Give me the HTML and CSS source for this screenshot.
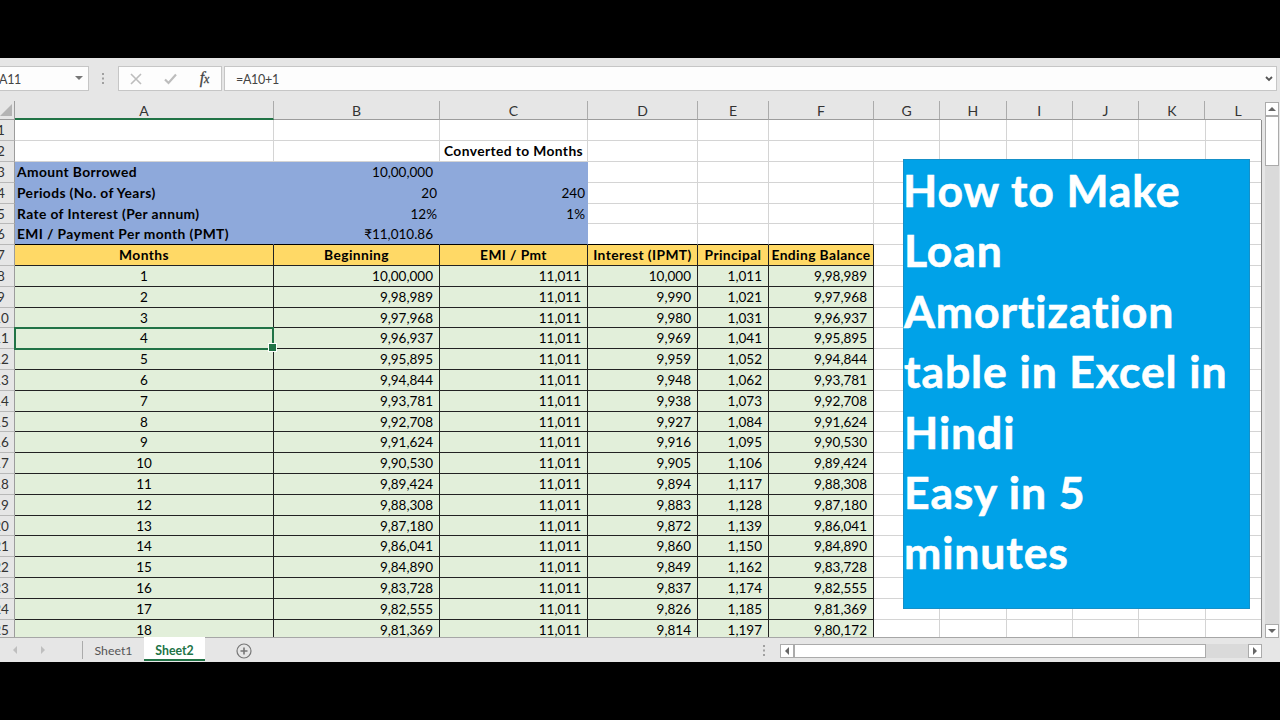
FILE: index.html
```html
<!DOCTYPE html>
<html lang="en">
  <head>
    <meta charset="utf-8">
    <title>Loan Amortization</title>
    <link rel="stylesheet" href="styles.css">
  </head>
  <body>
    <div class="app">
      <div class="formula-bar">
        <div class="name-box"><span>A11</span><i class="caret"></i></div>
        <svg class="dots" width="3" height="13" viewBox="0 0 3 13" fill="#a0a0a0"><path d="M0 1h2v2H0zM0 5.500h2v2H0zM0 10h2v2H0z"/></svg>
        <div class="fx-box">
          <svg width="12" height="12" viewBox="0 0 12 12" fill="none" stroke="#bdbdbd" stroke-width="1.600"><path d="M1 1l10 10M11 1L1 11"/></svg>
          <svg width="13" height="12" viewBox="0 0 13 12" fill="none" stroke="#bdbdbd" stroke-width="2.200"><path d="M1 6.500l3.500 3.500L12 1.500"/></svg>
          <span class="fx">f<small>x</small></span>
        </div>
        <div class="formula">
          <span>=A10+1</span>
          <svg width="8" height="6" viewBox="0 0 8 6" fill="none" stroke="#555" stroke-width="1.800"><path d="M1 1l3 3 3-3"/></svg>
        </div>
      </div>

      <div class="main">
        <div class="sheet">
          <div class="row head">
            <b class="corner"><svg width="12" height="12" viewBox="0 0 12 12" fill="#b4b4b4"><path d="M12 0v12H0z"/></svg></b>
            <span class="current">A</span><span>B</span><span>C</span><span>D</span><span>E</span><span>F</span>
            <div class="more"><span>G</span><span>H</span><span>I</span><span>J</span><span>K</span><span>L</span></div>
          </div>
          <div class="row"><b>1</b><span></span><span></span><span></span><span></span><span></span><span></span><div class="more"></div></div>
          <div class="row"><b>2</b><span></span><span></span><span class="note">Converted to Months</span><span></span><span></span><span></span><div class="more"></div></div>
          <div class="row input"><b>3</b><span>Amount Borrowed</span><span class="acc">10,00,000</span><span></span><span></span><span></span><span></span><div class="more"></div></div>
          <div class="row input"><b>4</b><span>Periods (No. of Years)</span><span>20</span><span>240</span><span></span><span></span><span></span><div class="more"></div></div>
          <div class="row input"><b>5</b><span>Rate of Interest (Per annum)</span><span>12%</span><span>1%</span><span></span><span></span><span></span><div class="more"></div></div>
          <div class="row input last"><b>6</b><span>EMI / Payment Per month (PMT)</span><span class="acc">₹11,010.86</span><span></span><span></span><span></span><span></span><div class="more"></div></div>
          <div class="row title"><b>7</b><span>Months</span><span>Beginning</span><span>EMI / Pmt</span><span>Interest (IPMT)</span><span>Principal</span><span>Ending Balance</span><div class="more"></div></div>
          <div class="row data"><b>8</b><span>1</span><span>10,00,000</span><span>11,011</span><span>10,000</span><span>1,011</span><span>9,98,989</span><div class="more"></div></div>
          <div class="row data"><b>9</b><span>2</span><span>9,98,989</span><span>11,011</span><span>9,990</span><span>1,021</span><span>9,97,968</span><div class="more"></div></div>
          <div class="row data"><b>10</b><span>3</span><span>9,97,968</span><span>11,011</span><span>9,980</span><span>1,031</span><span>9,96,937</span><div class="more"></div></div>
          <div class="row data"><b>11</b><span class="selected">4</span><span>9,96,937</span><span>11,011</span><span>9,969</span><span>1,041</span><span>9,95,895</span><div class="more"></div></div>
          <div class="row data"><b>12</b><span>5</span><span>9,95,895</span><span>11,011</span><span>9,959</span><span>1,052</span><span>9,94,844</span><div class="more"></div></div>
          <div class="row data"><b>13</b><span>6</span><span>9,94,844</span><span>11,011</span><span>9,948</span><span>1,062</span><span>9,93,781</span><div class="more"></div></div>
          <div class="row data"><b>14</b><span>7</span><span>9,93,781</span><span>11,011</span><span>9,938</span><span>1,073</span><span>9,92,708</span><div class="more"></div></div>
          <div class="row data"><b>15</b><span>8</span><span>9,92,708</span><span>11,011</span><span>9,927</span><span>1,084</span><span>9,91,624</span><div class="more"></div></div>
          <div class="row data"><b>16</b><span>9</span><span>9,91,624</span><span>11,011</span><span>9,916</span><span>1,095</span><span>9,90,530</span><div class="more"></div></div>
          <div class="row data"><b>17</b><span>10</span><span>9,90,530</span><span>11,011</span><span>9,905</span><span>1,106</span><span>9,89,424</span><div class="more"></div></div>
          <div class="row data"><b>18</b><span>11</span><span>9,89,424</span><span>11,011</span><span>9,894</span><span>1,117</span><span>9,88,308</span><div class="more"></div></div>
          <div class="row data"><b>19</b><span>12</span><span>9,88,308</span><span>11,011</span><span>9,883</span><span>1,128</span><span>9,87,180</span><div class="more"></div></div>
          <div class="row data"><b>20</b><span>13</span><span>9,87,180</span><span>11,011</span><span>9,872</span><span>1,139</span><span>9,86,041</span><div class="more"></div></div>
          <div class="row data"><b>21</b><span>14</span><span>9,86,041</span><span>11,011</span><span>9,860</span><span>1,150</span><span>9,84,890</span><div class="more"></div></div>
          <div class="row data"><b>22</b><span>15</span><span>9,84,890</span><span>11,011</span><span>9,849</span><span>1,162</span><span>9,83,728</span><div class="more"></div></div>
          <div class="row data"><b>23</b><span>16</span><span>9,83,728</span><span>11,011</span><span>9,837</span><span>1,174</span><span>9,82,555</span><div class="more"></div></div>
          <div class="row data"><b>24</b><span>17</span><span>9,82,555</span><span>11,011</span><span>9,826</span><span>1,185</span><span>9,81,369</span><div class="more"></div></div>
          <div class="row data"><b>25</b><span>18</span><span>9,81,369</span><span>11,011</span><span>9,814</span><span>1,197</span><span>9,80,172</span><div class="more"></div></div>
        </div>

        <div class="v-scroll">
          <div class="btn"><i class="up"></i></div>
          <div class="thumb"></div>
          <div class="track"></div>
          <div class="btn"><i class="down"></i></div>
        </div>
      </div>

      <div class="tab-bar">
        <div class="nav"><i class="left"></i><i class="right"></i></div>
        <div class="tab">Sheet1</div>
        <div class="tab active">Sheet2</div>
        <svg class="add" width="16" height="16" viewBox="0 0 16 16" fill="none" stroke="#777"><circle cx="8" cy="8" r="7" stroke-width="1.200"/><path d="M8 4.500v7M4.500 8h7" stroke-width="1.600"/></svg>
        <svg class="dots" width="3" height="13" viewBox="0 0 3 13" fill="#a0a0a0"><path d="M0 1h2v2H0zM0 5.500h2v2H0zM0 10h2v2H0z"/></svg>
        <div class="h-scroll">
          <div class="btn"><i class="left"></i></div>
          <div class="thumb"></div>
          <div class="track"></div>
          <div class="btn"><i class="right"></i></div>
        </div>
      </div>

      <div class="banner">How to Make<br>Loan<br>Amortization<br>table in Excel in<br>Hindi<br>Easy in 5<br>minutes</div>
    </div>
  </body>
</html>
```

FILE: styles.css
```css
* {
  box-sizing: border-box;
}

body {
  background: #000;
  font-family: Lato, sans-serif;
  height: 720px;
  margin: 0;
  overflow: hidden;
  padding-top: 58px;
}

.app {
  background: #e6e6e6;
  display: flex;
  flex-direction: column;
  height: 604px;
  overflow: hidden;
  position: relative;
}

/* formula bar */
.formula-bar {
  color: #444;
  display: flex;
  flex: none;
  font-size: 12.5px;
  height: 34px;
  letter-spacing: -.3px;
  padding: 8px 3px 0 0;
}

.name-box, .fx-box, .formula {
  align-items: center;
  background: #fdfdfd;
  border: 1px solid #c6c6c6;
  display: flex;
  height: 25px;
}

.name-box span, .formula span {
  padding-top: 1px;
}

.name-box {
  border-left: 0;
  justify-content: space-between;
  margin-left: -1px;
  padding-right: 5px;
  width: 90px;
}

.caret {
  border: 4px solid transparent;
  border-bottom: 0;
  border-top-color: #777;
  margin-top: -2px;
}

.formula-bar .dots {
  margin: 6px 13px 0 13px;
}

.fx-box {
  justify-content: space-between;
  padding: 0 12px 0 11px;
  width: 104px;
}

.fx {
  font: italic 16px/20px "Liberation Serif", serif;
  -webkit-text-stroke: .3px #444;
}

.fx small {
  font-size: 12px;
}

.formula {
  flex: 1;
  justify-content: space-between;
  margin-left: 2px;
  padding: 0 3px 0 11px;
}

/* grid */
.main {
  display: flex;
  flex: none;
  height: 546px;
}

.sheet {
  border-bottom: 1px solid #a6a6a6;
  height: 546px;
  margin-left: -12px;
  overflow: hidden;
  width: 1274px;
}

.row {
  background: #fff;
  border-right: 1px solid #8c8c8c;
  display: grid;
  font-size: 13.5px;
  grid-template-columns: 27px 259px 166px 148px 110px 71px 105px 1fr;
  grid-template-rows: 100%;
  height: 21px;
  line-height: 20px;
  white-space: nowrap;
}

.row:nth-child(5n+6) {
  height: 20px;
}

.row > b, .row > span {
  border-bottom: 1px solid #d4d4d4;
  border-right: 1px solid #d4d4d4;
}

.row > b {
  background: #e6e6e6;
  border-bottom-color: #b8b8b8;
  border-right-color: #9c9c9c;
  color: #333;
  font-weight: normal;
  text-align: center;
}

.more {
  background: repeating-linear-gradient(90deg, transparent 0 65.3px, #d4d4d4 65.3px 66.3px);
  border-bottom: 1px solid #d4d4d4;
  display: flex;
  overflow: hidden;
}

.head {
  background: #e6e6e6;
  border-right-color: #e6e6e6;
  color: #333;
  font-size: 14px;
  height: 28px;
  padding-top: 9px;
}

.head > b, .head > span, .head .more {
  border-bottom-color: #9c9c9c;
}

.head > span {
  border-right-color: #ababab;
  text-align: center;
}

.head .more {
  background: none;
}

.more span {
  border-right: 1px solid #ababab;
  flex: 0 0 66.3px;
  text-align: center;
}

.head .current {
  border-bottom: 2px solid #217346;
}

.corner {
  padding: 0 2px 0 0;
}

.corner svg {
  display: block;
  margin: 3px 0 0 auto;
}

.note, .title > span, .input > span:first-of-type {
  font-size: 13.8px;
  font-weight: bold;
  letter-spacing: .4px;
}

.note {
  text-align: center;
}

.input > span:nth-of-type(-n+3) {
  background: #8ea9db;
  border-color: #8ea9db;
  padding-right: 2px;
  text-align: right;
}

.input > span:nth-of-type(1) {
  padding-left: 2px;
  text-align: left;
}

.input > .acc:nth-of-type(2) {
  padding-right: 6px;
}

.last > span:nth-of-type(-n+6) {
  border-bottom-color: #000;
}

.title > span {
  background: #ffd966;
  border-color: #222;
  text-align: center;
}

.data > span {
  background: #e2efda;
  border-color: #222;
  padding-right: 6px;
  text-align: right;
}

.data > span:first-of-type {
  padding: 0;
  text-align: center;
}

.data .selected {
  position: relative;
}

.selected::before {
  border: 2px solid #217346;
  content: "";
  inset: -1px -1px -2px;
  position: absolute;
}

.selected::after {
  background: #217346;
  border: 1px solid #fff;
  bottom: -4px;
  content: "";
  height: 7px;
  position: absolute;
  right: -4px;
  width: 7px;
}

/* scrollbars */
.btn {
  align-items: center;
  background: #fff;
  border: 1px solid #ababab;
  display: flex;
  flex: 0 0 14px;
  justify-content: center;
}

.thumb {
  background: #fff;
  border: 1px solid #ababab;
}

.track {
  background: #dadada;
  flex: 1;
}

.v-scroll {
  display: flex;
  flex-direction: column;
  height: 536px;
  margin: 10px 0 0 3px;
  width: 14px;
}

.v-scroll .thumb {
  height: 50px;
}

.up, .down, .left, .right {
  border: 4px solid transparent;
}

.up {
  border-bottom-color: #666;
  border-top: 0;
}

.down {
  border-bottom: 0;
  border-top-color: #666;
}

.left {
  border-left: 0;
  border-right-color: #666;
}

.right {
  border-left-color: #666;
  border-right: 0;
}

/* sheet tabs */
.tab-bar {
  display: flex;
  flex: 1;
  font-size: 12.3px;
}

.nav {
  align-items: center;
  border-right: 1px solid #ababab;
  display: flex;
  gap: 24px;
  height: 18px;
  margin-top: 3px;
  padding-left: 13px;
  width: 83px;
}

.nav i {
  opacity: .3;
}

.tab {
  color: #555;
  line-height: 25px;
  text-align: center;
  width: 61px;
}

.active {
  background: #fff;
  border-bottom: 2px solid #217346;
  color: #217346;
  font-weight: bold;
  height: 24px;
  line-height: 27px;
  margin-top: -1px;
}

.add {
  margin: 5px 0 0 31px;
}

.tab-bar .dots {
  margin: 6px 14px 0 511px;
}

.h-scroll {
  display: flex;
  height: 14px;
  margin-top: 6px;
  width: 482px;
}

.h-scroll .thumb {
  width: 412px;
}

.banner {
  background: #00a2e8;
  border: 1px solid #1590c8;
  color: #fff;
  font-size: 44.5px;
  font-weight: bold;
  height: 450px;
  left: 903px;
  letter-spacing: .9px;
  line-height: 60.4px;
  position: absolute;
  text-indent: -1px;
  top: 101px;
  -webkit-text-stroke: .6px #fff;
  white-space: nowrap;
  width: 347px;
}
```
